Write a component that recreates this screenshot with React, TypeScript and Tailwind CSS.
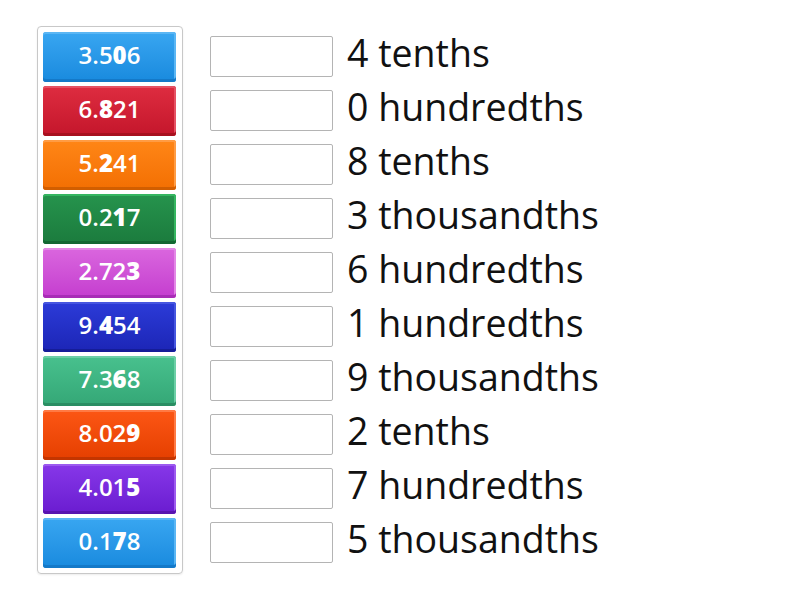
import React from "react";

const tiles: { pre: string; bold: string; post: string; cls: string }[] = [
  { pre: "3.5", bold: "0", post: "6", cls: "bg-gradient-to-b from-[#38a6f1] to-[#188ade] shadow-[inset_0_-3px_0_#1479c8,inset_-2px_0_0_#5ab6f4,inset_0_2px_0_#5ab6f4]" },
  { pre: "6.", bold: "8", post: "21", cls: "bg-gradient-to-b from-[#de2c40] to-[#c4152b] shadow-[inset_0_-3px_0_#a8101f,inset_-2px_0_0_#e65163,inset_0_2px_0_#e65163]" },
  { pre: "5.", bold: "2", post: "41", cls: "bg-gradient-to-b from-[#ff8616] to-[#f36f02] shadow-[inset_0_-3px_0_#d25e00,inset_-2px_0_0_#ff9c44,inset_0_2px_0_#ff9c44]" },
  { pre: "0.2", bold: "1", post: "7", cls: "bg-gradient-to-b from-[#26944d] to-[#1b7b3d] shadow-[inset_0_-3px_0_#136632,inset_-2px_0_0_#35b660,inset_0_2px_0_#35b660]" },
  { pre: "2.72", bold: "3", post: "", cls: "bg-gradient-to-b from-[#da66de] to-[#c43ccf] shadow-[inset_0_-3px_0_#a82cb6,inset_-2px_0_0_#e387e6,inset_0_2px_0_#e387e6]" },
  { pre: "9.", bold: "4", post: "54", cls: "bg-gradient-to-b from-[#2c3bd8] to-[#1c25b6] shadow-[inset_0_-3px_0_#151d98,inset_-2px_0_0_#4656e0,inset_0_2px_0_#4656e0]" },
  { pre: "7.3", bold: "6", post: "8", cls: "bg-gradient-to-b from-[#48c18e] to-[#34a776] shadow-[inset_0_-3px_0_#2a8e63,inset_-2px_0_0_#6ccfa6,inset_0_2px_0_#6ccfa6]" },
  { pre: "8.02", bold: "9", post: "", cls: "bg-gradient-to-b from-[#fc5614] to-[#e53f00] shadow-[inset_0_-3px_0_#c43500,inset_-2px_0_0_#ff7a44,inset_0_2px_0_#ff7a44]" },
  { pre: "4.01", bold: "5", post: "", cls: "bg-gradient-to-b from-[#8737e9] to-[#6a1bd0] shadow-[inset_0_-3px_0_#5813b0,inset_-2px_0_0_#9d5aef,inset_0_2px_0_#9d5aef]" },
  { pre: "0.1", bold: "7", post: "8", cls: "bg-gradient-to-b from-[#38a6f1] to-[#188ade] shadow-[inset_0_-3px_0_#1479c8,inset_-2px_0_0_#5ab6f4,inset_0_2px_0_#5ab6f4]" },
];

const labels = [
  "4 tenths",
  "0 hundredths",
  "8 tenths",
  "3 thousandths",
  "6 hundredths",
  "1 hundredths",
  "9 thousandths",
  "2 tenths",
  "7 hundredths",
  "5 thousandths",
];

export default function App() {
  return (
    <div
      className="w-[800px] h-[600px] bg-white flex items-start pl-[37px] pt-[26px]"
      style={{ fontFamily: '"Open Sans", sans-serif' }}
    >
      <div className="border border-[#c8c8c8] rounded-[4px] pl-[5px] pr-[6px] py-[5px] flex flex-col gap-[4px] shadow-[0_1px_2px_rgba(0,0,0,0.08)]">
        {tiles.map((t, i) => (
          <div
            key={i}
            className={`w-[133px] h-[50px] rounded-[3px] flex items-center justify-center pb-[5px] text-white text-[24px] font-semibold leading-none ${t.cls}`}
          >
            <span>
              {t.pre}
              <span className="font-extrabold">{t.bold}</span>
              {t.post}
            </span>
          </div>
        ))}
      </div>
      <div className="ml-[27px] mt-[10px] flex flex-col gap-[13px]">
        {labels.map((l, i) => (
          <div key={i} className="flex items-center h-[41px]">
            <div className="w-[123px] h-[41px] border border-[#b4b4b4] rounded-[2px] bg-white shrink-0" />
            <span className="ml-[14px] pb-[8px] text-[37.5px] text-[#111] leading-none whitespace-nowrap">{l}</span>
          </div>
        ))}
      </div>
    </div>
  );
}
